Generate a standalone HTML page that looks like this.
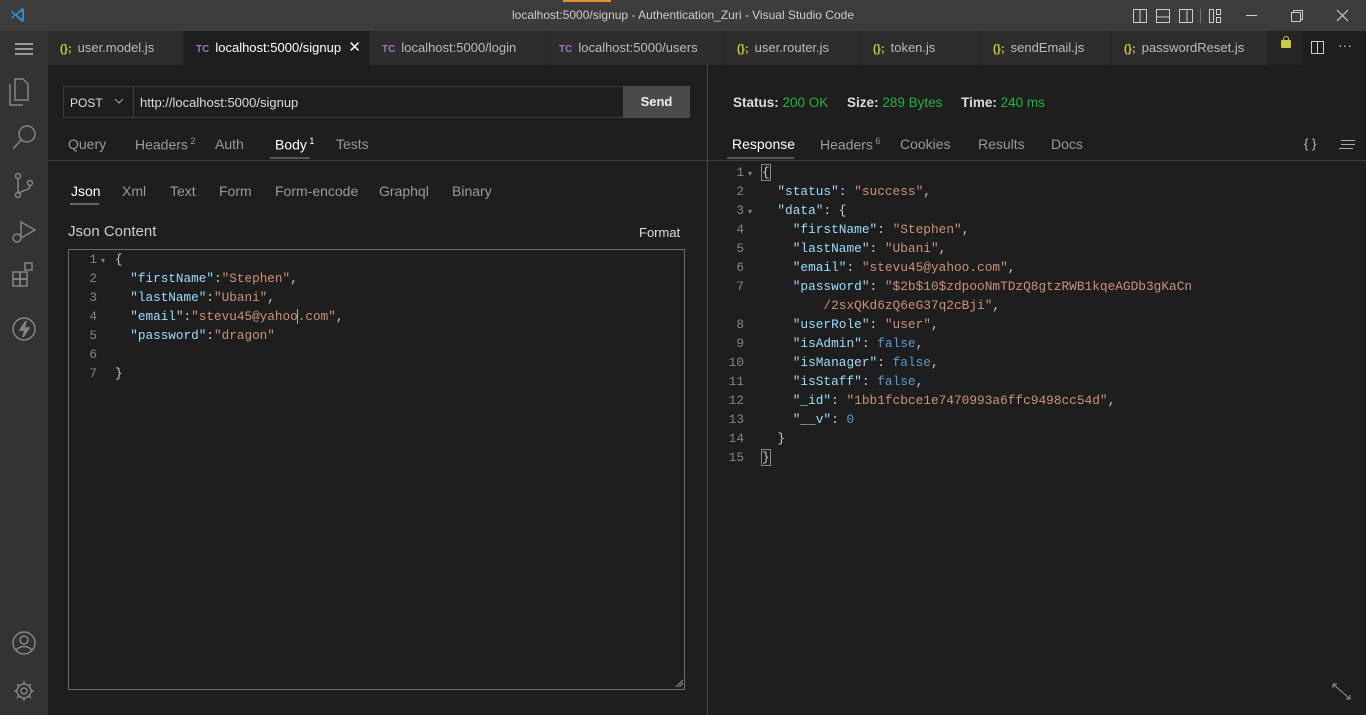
<!DOCTYPE html>
<html><head><meta charset="utf-8"><style>
*{margin:0;padding:0;box-sizing:border-box}
body{width:1366px;height:715px;background:#1e1e1e;font-family:"Liberation Sans",sans-serif;color:#ccc;position:relative;overflow:hidden;font-size:13px}
.a{position:absolute;white-space:pre}
.title{left:0;top:0;width:1366px;height:31px;background:#3c3c3c}
.act{left:0;top:31px;width:48px;height:684px;background:#333}
.tabs{left:48px;top:31px;width:1318px;height:34px;background:#252526}
.tab{position:absolute;top:0;height:34px;background:#2d2d2d;border-right:1px solid #252526;color:#bbb;font-size:13px;line-height:34px;padding-left:12px}
.tab b{font-weight:bold;font-size:11px;margin-right:6px}
.js{color:#cbcb41}.tc{color:#a074c4;font-size:10px!important}
.mono{font-family:"Liberation Mono",monospace;font-size:12.8px}
.mono div{height:19px;line-height:19px}
.ln{color:#858585;text-align:right}
.k{color:#9cdcfe}.s{color:#ce9178}.b{color:#569cd6}
.g{color:#23b33a}
.fold{color:#888;font-size:8px}
</style></head><body>
<div class="a title"></div>
<svg class="a" style="left:10px;top:7px" width="16" height="16" viewBox="0 0 16 16"><path d="M12 1L5 8l7 7 2-1V2z M12 4v8L7 8z" fill="#2b8fd6" fill-rule="evenodd"/><path d="M1 5l1-1 10 8-1 2z M1 11l1 1 3-3-1-1z" fill="#2b8fd6"/></svg>
<div class="a" style="left:563px;top:0;width:48px;height:2px;background:#e8912d"></div>
<div class="a" style="left:0;top:8px;width:1366px;text-align:center;font-size:12px;color:#ccc">localhost:5000/signup - Authentication_Zuri - Visual Studio Code</div>
<svg class="a" style="left:1132px;top:8px" width="90" height="16" fill="none" stroke="#ccc"><rect x="1.5" y="1.5" width="13" height="13"/><line x1="8" y1="1.5" x2="8" y2="14.5"/><rect x="24.5" y="1.5" width="13" height="13"/><line x1="24.5" y1="9" x2="37.5" y2="9"/><rect x="47.5" y="1.5" width="13" height="13"/><line x1="55" y1="1.5" x2="55" y2="14.5"/><line x1="68.5" y1="1" x2="68.5" y2="15" stroke="#777"/><rect x="77.5" y="1.5" width="4" height="13"/><rect x="84.5" y="1.5" width="4" height="5"/><rect x="84.5" y="9.5" width="4" height="5"/></svg>
<div class="a" style="left:1246px;top:15px;width:11px;height:1px;background:#ccc"></div>
<svg class="a" style="left:1290px;top:9px" width="14" height="14" fill="none" stroke="#ccc"><rect x="1.5" y="3.5" width="9" height="9"/><path d="M3.5 3.5V1.5h9v9h-2"/></svg>
<svg class="a" style="left:1336px;top:9px" width="13" height="13" stroke="#ccc" stroke-width="1.2"><path d="M1 1L12 12M12 1L1 12"/></svg>

<div class="a act"></div>
<div class="a" style="left:15px;top:43px;width:18px;height:1.5px;background:#999;box-shadow:0 5px 0 #999,0 10px 0 #999"></div>
<svg class="a" style="left:0;top:70px" width="48" height="300" fill="none" stroke="#858585" stroke-width="1.5">
<path d="M18 9h8l5 5v16H18z M13 14v21h13" transform="translate(-3,0)"/>
<circle cx="27" cy="64" r="8"/><path d="M21 70L13 79"/>
<circle cx="18" cy="106" r="2.5"/><circle cx="18" cy="125" r="2.5"/><circle cx="30" cy="113" r="2.5"/><path d="M18 108v14M30 116c0 5-10 4-11 8"/>
<path d="M21 152l14 8-14 8z"/><circle cx="17" cy="168" r="4"/>
<rect x="13" y="202" width="7" height="7"/><rect x="20" y="202" width="7" height="7"/><rect x="13" y="209" width="7" height="7"/><rect x="20" y="209" width="7" height="7"/><rect x="25" y="193" width="7" height="7"/>
<circle cx="24" cy="259" r="11"/><path d="M26 251l-6 9h5l-2 7 6-9h-5z" fill="#858585"/>
</svg>
<svg class="a" style="left:0;top:625px" width="48" height="80" fill="none" stroke="#858585" stroke-width="1.5"><circle cx="24" cy="18" r="11"/><circle cx="24" cy="15" r="4"/><path d="M16 26c3-6 13-6 16 0"/><circle cx="24" cy="66" r="3"/><path d="M24 56v3M24 73v3M14 66h3M31 66h3M17 59l2 2M29 71l2 2M31 59l-2 2M19 71l-2 2"/><circle cx="24" cy="66" r="7"/></svg>

<div class="a tabs"></div>
<div class="tab" style="left:48px;width:136px;top:31px"><b class="js">(};</b>user.model.js</div>
<div class="tab" style="left:184px;width:186px;top:31px;background:#1e1e1e;color:#fff"><b class="tc">TC</b>localhost:5000/signup<span style="position:absolute;right:8px;font-size:15px">✕</span></div>
<div class="tab" style="left:370px;width:177px;top:31px"><b class="tc">TC</b>localhost:5000/login</div>
<div class="tab" style="left:547px;width:178px;top:31px"><b class="tc">TC</b>localhost:5000/users</div>
<div class="tab" style="left:725px;width:136px;top:31px"><b class="js">(};</b>user.router.js</div>
<div class="tab" style="left:861px;width:120px;top:31px"><b class="js">(};</b>token.js</div>
<div class="tab" style="left:981px;width:131px;top:31px"><b class="js">(};</b>sendEmail.js</div>
<div class="tab" style="left:1112px;width:156px;top:31px"><b class="js">(};</b>passwordReset.js</div>
<div class="a" style="left:1302px;top:31px;width:64px;height:34px;background:#1e1e1e"></div>
<div class="a" style="left:1281px;top:40px;width:10px;height:8px;background:#cbcb41;border-radius:1px;"></div>
<div class="a" style="left:1283px;top:36px;width:6px;height:6px;border:1.5px solid #cbcb41;border-bottom:none;border-radius:3px 3px 0 0"></div>
<svg class="a" style="left:1310px;top:40px" width="15" height="15" fill="none" stroke="#ccc"><rect x="1.5" y="1.5" width="12" height="12"/><line x1="7.5" y1="1.5" x2="7.5" y2="13.5"/></svg>
<div class="a" style="left:1338px;top:37px;color:#ccc;font-size:14px">···</div>

<!-- left panel -->
<div class="a" style="left:63px;top:86px;width:627px;height:32px;border:1px solid #3c3c3c;background:#1e1e1e"></div>
<div class="a" style="left:133px;top:86px;width:1px;height:32px;background:#3c3c3c"></div>
<div class="a" style="left:70px;top:96px;font-size:12px;color:#ddd">POST</div>
<svg class="a" style="left:114px;top:98px" width="10" height="7" fill="none" stroke="#aaa"><path d="M1 1l4 4 4-4"/></svg>
<div class="a" style="left:140px;top:95px;font-size:13px;color:#ddd">http://localhost:5000/signup</div>
<div class="a" style="left:623px;top:86px;width:67px;height:32px;background:#4a4a4a;color:#eee;font-size:13px;text-align:center;line-height:32px;font-weight:bold">Send</div>
<div class="a" style="left:48px;top:160px;width:659px;height:1px;background:#3a3a3a"></div>
<div class="a" style="left:68px;top:136px;font-size:14px;color:#999">Query</div>
<div class="a" style="left:135px;top:136px;font-size:14px;color:#999">Headers<sup style="font-size:9px"> 2</sup></div>
<div class="a" style="left:215px;top:136px;font-size:14px;color:#999">Auth</div>
<div class="a" style="left:275px;top:136px;font-size:14px;color:#fff">Body<sup style="font-size:9px"> 1</sup></div>
<div class="a" style="left:270px;top:157px;width:40px;height:2px;background:#555"></div>
<div class="a" style="left:336px;top:136px;font-size:14px;color:#999">Tests</div>
<div class="a" style="left:71px;top:183px;font-size:14px;color:#fff">Json</div>
<div class="a" style="left:70px;top:203px;width:29px;height:1.5px;background:#666"></div>
<div class="a" style="left:122px;top:183px;font-size:14px;color:#999">Xml</div>
<div class="a" style="left:170px;top:183px;font-size:14px;color:#999">Text</div>
<div class="a" style="left:219px;top:183px;font-size:14px;color:#999">Form</div>
<div class="a" style="left:275px;top:183px;font-size:14px;color:#999">Form-encode</div>
<div class="a" style="left:379px;top:183px;font-size:14px;color:#999">Graphql</div>
<div class="a" style="left:452px;top:183px;font-size:14px;color:#999">Binary</div>
<div class="a" style="left:68px;top:223px;font-size:15px;color:#ccc">Json Content</div>
<div class="a" style="left:639px;top:225px;font-size:13px;color:#ddd">Format</div>
<div class="a" style="left:68px;top:249px;width:617px;height:441px;border:1px solid #6a6a6a"></div>
<div class="a mono ln" style="left:69px;top:250px;width:28px;font-size:12.7px"><div>1</div><div>2</div><div>3</div><div>4</div><div>5</div><div>6</div><div>7</div></div>
<div class="a fold" style="left:101px;top:256px">▾</div>
<div class="a mono" style="left:115px;top:250px;font-size:12.7px"><div>{</div><div>  <span class="k">"firstName"</span>:<span class="s">"Stephen"</span>,</div><div>  <span class="k">"lastName"</span>:<span class="s">"Ubani"</span>,</div><div>  <span class="k">"email"</span>:<span class="s">"stevu45@yahoo<span style="border-left:1px solid #aaa;margin-left:-1px"></span>.com"</span>,</div><div>  <span class="k">"password"</span>:<span class="s">"dragon"</span></div><div> </div><div>}</div></div>
<svg class="a" style="left:675px;top:679px" width="9" height="9" stroke="#999"><path d="M8 1L1 8M8 4L4 8"/></svg>

<div class="a" style="left:707px;top:65px;width:1px;height:650px;background:#444"></div>

<!-- right panel -->
<div class="a" style="left:733px;top:95px;font-size:13.5px;font-weight:bold;color:#ddd">Status: <span class="g" style="font-weight:normal">200 OK</span>     Size: <span class="g" style="font-weight:normal">289 Bytes</span>     Time: <span class="g" style="font-weight:normal">240 ms</span></div>
<div class="a" style="left:708px;top:160px;width:658px;height:1px;background:#3a3a3a"></div>
<div class="a" style="left:732px;top:136px;font-size:14px;color:#fff">Response</div>
<div class="a" style="left:727px;top:157px;width:67px;height:2px;background:#555"></div>
<div class="a" style="left:820px;top:136px;font-size:14px;color:#999">Headers<sup style="font-size:9px"> 6</sup></div>
<div class="a" style="left:900px;top:136px;font-size:14px;color:#999">Cookies</div>
<div class="a" style="left:978px;top:136px;font-size:14px;color:#999">Results</div>
<div class="a" style="left:1051px;top:136px;font-size:14px;color:#999">Docs</div>
<div class="a" style="left:1304px;top:136px;font-size:13px;color:#bbb">{ }</div>
<div class="a" style="left:1341px;top:140px;width:14px;height:1.3px;background:#aaa;box-shadow:0 4px 0 #aaa,-2px 8px 0 #aaa"></div>
<div class="a mono ln" style="left:716px;top:163px;width:28px"><div>1</div><div>2</div><div>3</div><div>4</div><div>5</div><div>6</div><div>7</div><div> </div><div>8</div><div>9</div><div>10</div><div>11</div><div>12</div><div>13</div><div>14</div><div>15</div></div>
<div class="a fold" style="left:748px;top:169px">▾</div>
<div class="a fold" style="left:748px;top:207px">▾</div>
<div class="a mono" style="left:762px;top:163px"><div><span style="outline:1px solid #888">{</span></div><div>  <span class="k">"status"</span>: <span class="s">"success"</span>,</div><div>  <span class="k">"data"</span>: {</div><div>    <span class="k">"firstName"</span>: <span class="s">"Stephen"</span>,</div><div>    <span class="k">"lastName"</span>: <span class="s">"Ubani"</span>,</div><div>    <span class="k">"email"</span>: <span class="s">"stevu45@yahoo.com"</span>,</div><div>    <span class="k">"password"</span>: <span class="s">"$2b$10$zdpooNmTDzQ8gtzRWB1kqeAGDb3gKaCn</span></div><div><span class="s">        /2sxQKd6zQ6eG37q2cBji"</span>,</div><div>    <span class="k">"userRole"</span>: <span class="s">"user"</span>,</div><div>    <span class="k">"isAdmin"</span>: <span class="b">false</span>,</div><div>    <span class="k">"isManager"</span>: <span class="b">false</span>,</div><div>    <span class="k">"isStaff"</span>: <span class="b">false</span>,</div><div>    <span class="k">"_id"</span>: <span class="s">"1bb1fcbce1e7470993a6ffc9498cc54d"</span>,</div><div>    <span class="k">"__v"</span>: <span class="b">0</span></div><div>  }</div><div><span style="outline:1px solid #888">}</span></div></div>
<svg class="a" style="left:1332px;top:683px" width="20" height="18" fill="none" stroke="#999"><path d="M1 1l17 15M1 1h4M1 1v4M18 16h-4M18 16v-4"/></svg>
</body></html>
